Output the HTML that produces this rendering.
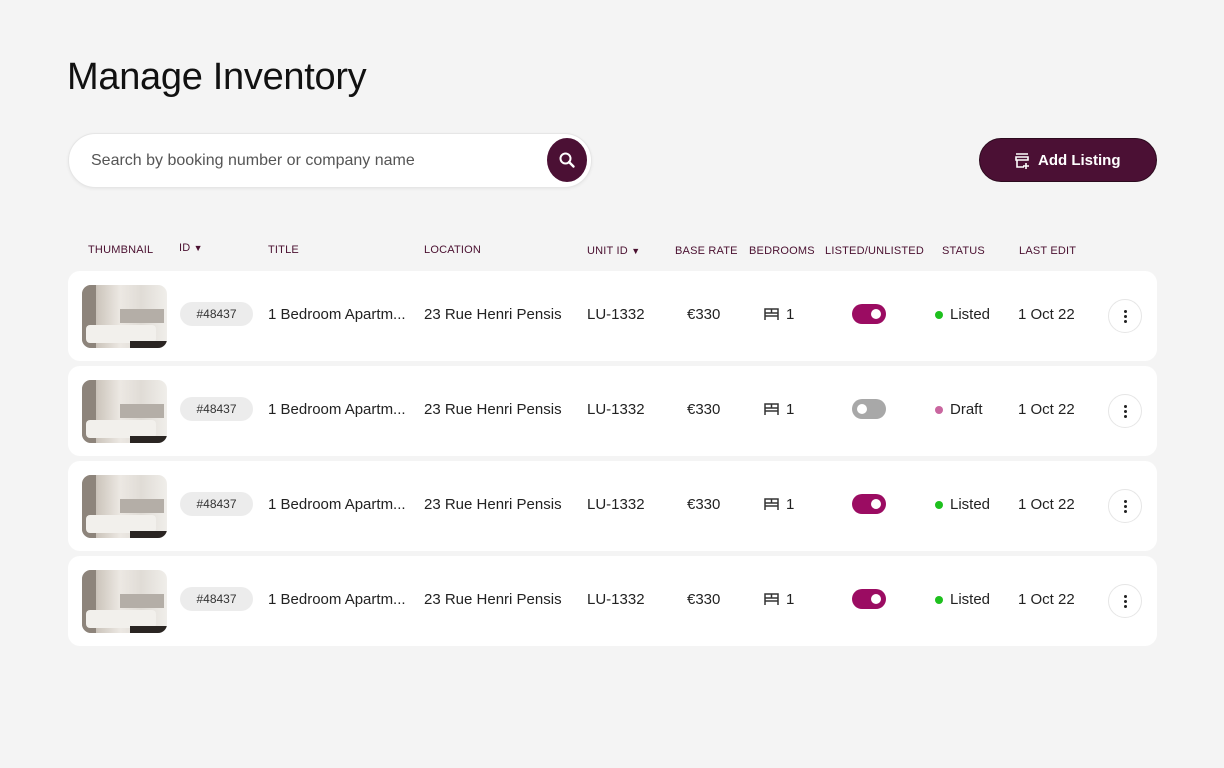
<!DOCTYPE html>
<html><head><meta charset="utf-8"><style>
*{box-sizing:border-box;margin:0;padding:0}
body{width:1224px;height:768px;background:#f4f4f4;font-family:"Liberation Sans",sans-serif;color:#1a1a1a;position:relative;overflow:hidden}
.abs{position:absolute}
h1{position:absolute;left:67px;top:56px;font-size:38px;font-weight:400;letter-spacing:-0.3px;color:#111}
.search{left:68px;top:133px;width:524px;height:55px;background:#fff;border:1px solid #e6e6e6;border-radius:28px;box-shadow:0 1px 3px rgba(0,0,0,.06)}
.search span{position:absolute;left:22px;top:18px;font-size:16px;color:#555}
.sbtn{left:547px;top:138px;width:40px;height:44px;border-radius:50%;background:#4b1034}
.add{left:979px;top:138px;width:178px;height:44px;border-radius:22px;background:#4b1034;border:1px solid #2c0a1e;color:#fff;font-size:15px;font-weight:bold}
.hd{position:absolute;top:244px;font-size:11px;color:#4a1030;letter-spacing:.2px}
.row{position:absolute;left:68px;width:1089px;height:90px;background:#fff;border-radius:12px}
.thumb{position:absolute;left:14px;top:14px;width:85px;height:63px;border-radius:9px;overflow:hidden;background:linear-gradient(90deg,#a89f96 0%,#cfc8bf 20%,#ece8e3 45%,#e0dcd6 70%,#f0eeea 100%)}
.thumb i{position:absolute;display:block}
.pill{position:absolute;left:112px;top:31px;width:73px;height:24px;border-radius:12px;background:#ececec;font-size:12px;text-align:center;line-height:24px;color:#333}
.t{position:absolute;top:35px;font-size:15px;color:#222}
.tog{position:absolute;left:784px;top:33px;width:34px;height:20px;border-radius:10px;background:#9b0c62}
.tog:after{content:"";position:absolute;right:5px;top:5px;width:10px;height:10px;border-radius:50%;background:#fff}
.tog.off{background:#a8a8a8}
.tog.off:after{right:auto;left:5px}
.dot{position:absolute;left:867px;top:40px;width:8px;height:8px;border-radius:50%;background:#1ec01e}
.menu{position:absolute;left:1040px;top:28px;width:34px;height:34px;border-radius:50%;border:1px solid #e6e6e6}
.menu i{position:absolute;left:15px;width:3px;height:3px;border-radius:50%;background:#222}
</style></head><body>
<h1>Manage Inventory</h1>
<div class="abs search"><span>Search by booking number or company name</span></div>
<div class="abs sbtn"><svg width="40" height="44" viewBox="0 0 40 44"><circle cx="18.5" cy="20.5" r="5" fill="none" stroke="#fff" stroke-width="2"/><path d="M22 24l4.5 4.5" stroke="#fff" stroke-width="2.4" stroke-linecap="round"/></svg></div>
<div class="abs add"><svg class="abs" style="left:34px;top:13px" width="18" height="18" viewBox="0 0 18 18"><path d="M2 2h12M2 5h12v3H2zM3 8v7h7M12 11v6M9 14h6" stroke="#fff" stroke-width="1.6" fill="none"/></svg><span class="abs" style="left:58px;top:13px">Add Listing</span></div>

<div class="hd" style="left:88px">THUMBNAIL</div>
<div class="hd" style="left:179px;top:242px">ID <span style="font-size:9px">▼</span></div>
<div class="hd" style="left:268px">TITLE</div>
<div class="hd" style="left:424px">LOCATION</div>
<div class="hd" style="left:587px;top:245px">UNIT ID <span style="font-size:9px">▼</span></div>
<div class="hd" style="left:675px;top:245px">BASE RATE</div>
<div class="hd" style="left:749px;top:245px">BEDROOMS</div>
<div class="hd" style="left:825px;top:245px">LISTED/UNLISTED</div>
<div class="hd" style="left:942px;top:245px">STATUS</div>
<div class="hd" style="left:1019px;top:245px">LAST EDIT</div>

<div class="row" style="top:271px">
<div class="thumb"><i style="left:0;top:0;width:14px;height:63px;background:#8d847b"></i><i style="left:38px;top:24px;width:44px;height:14px;background:#b4aea7"></i><i style="left:4px;top:40px;width:70px;height:18px;background:#f2f0ec;border-radius:4px"></i><i style="left:48px;top:56px;width:37px;height:7px;background:#2a2522"></i></div>
<div class="pill">#48437</div>
<div class="t" style="left:200px">1 Bedroom Apartm...</div>
<div class="t" style="left:356px">23 Rue Henri Pensis</div>
<div class="t" style="left:519px">LU-1332</div>
<div class="t" style="left:619px">€330</div>
<svg class="abs" style="left:695px;top:36px" width="17" height="15" viewBox="0 0 17 15"><path d="M2 13V2h13v11M2 9h13M2 6h13M8.5 2v4" stroke="#333" stroke-width="1.5" fill="none"/></svg>
<div class="t" style="left:718px">1</div>
<div class="tog"></div><div class="dot"></div>
<div class="t" style="left:882px">Listed</div>
<div class="t" style="left:950px">1 Oct 22</div>
<div class="menu"><i style="top:10px"></i><i style="top:15px"></i><i style="top:20px"></i></div>
</div>

<div class="row" style="top:366px">
<div class="thumb"><i style="left:0;top:0;width:14px;height:63px;background:#8d847b"></i><i style="left:38px;top:24px;width:44px;height:14px;background:#b4aea7"></i><i style="left:4px;top:40px;width:70px;height:18px;background:#f2f0ec;border-radius:4px"></i><i style="left:48px;top:56px;width:37px;height:7px;background:#2a2522"></i></div>
<div class="pill">#48437</div>
<div class="t" style="left:200px">1 Bedroom Apartm...</div>
<div class="t" style="left:356px">23 Rue Henri Pensis</div>
<div class="t" style="left:519px">LU-1332</div>
<div class="t" style="left:619px">€330</div>
<svg class="abs" style="left:695px;top:36px" width="17" height="15" viewBox="0 0 17 15"><path d="M2 13V2h13v11M2 9h13M2 6h13M8.5 2v4" stroke="#333" stroke-width="1.5" fill="none"/></svg>
<div class="t" style="left:718px">1</div>
<div class="tog off"></div><div class="dot" style="background:#c9669f"></div>
<div class="t" style="left:882px">Draft</div>
<div class="t" style="left:950px">1 Oct 22</div>
<div class="menu"><i style="top:10px"></i><i style="top:15px"></i><i style="top:20px"></i></div>
</div>

<div class="row" style="top:461px">
<div class="thumb"><i style="left:0;top:0;width:14px;height:63px;background:#8d847b"></i><i style="left:38px;top:24px;width:44px;height:14px;background:#b4aea7"></i><i style="left:4px;top:40px;width:70px;height:18px;background:#f2f0ec;border-radius:4px"></i><i style="left:48px;top:56px;width:37px;height:7px;background:#2a2522"></i></div>
<div class="pill">#48437</div>
<div class="t" style="left:200px">1 Bedroom Apartm...</div>
<div class="t" style="left:356px">23 Rue Henri Pensis</div>
<div class="t" style="left:519px">LU-1332</div>
<div class="t" style="left:619px">€330</div>
<svg class="abs" style="left:695px;top:36px" width="17" height="15" viewBox="0 0 17 15"><path d="M2 13V2h13v11M2 9h13M2 6h13M8.5 2v4" stroke="#333" stroke-width="1.5" fill="none"/></svg>
<div class="t" style="left:718px">1</div>
<div class="tog"></div><div class="dot"></div>
<div class="t" style="left:882px">Listed</div>
<div class="t" style="left:950px">1 Oct 22</div>
<div class="menu"><i style="top:10px"></i><i style="top:15px"></i><i style="top:20px"></i></div>
</div>

<div class="row" style="top:556px">
<div class="thumb"><i style="left:0;top:0;width:14px;height:63px;background:#8d847b"></i><i style="left:38px;top:24px;width:44px;height:14px;background:#b4aea7"></i><i style="left:4px;top:40px;width:70px;height:18px;background:#f2f0ec;border-radius:4px"></i><i style="left:48px;top:56px;width:37px;height:7px;background:#2a2522"></i></div>
<div class="pill">#48437</div>
<div class="t" style="left:200px">1 Bedroom Apartm...</div>
<div class="t" style="left:356px">23 Rue Henri Pensis</div>
<div class="t" style="left:519px">LU-1332</div>
<div class="t" style="left:619px">€330</div>
<svg class="abs" style="left:695px;top:36px" width="17" height="15" viewBox="0 0 17 15"><path d="M2 13V2h13v11M2 9h13M2 6h13M8.5 2v4" stroke="#333" stroke-width="1.5" fill="none"/></svg>
<div class="t" style="left:718px">1</div>
<div class="tog"></div><div class="dot"></div>
<div class="t" style="left:882px">Listed</div>
<div class="t" style="left:950px">1 Oct 22</div>
<div class="menu"><i style="top:10px"></i><i style="top:15px"></i><i style="top:20px"></i></div>
</div>
</body></html>
